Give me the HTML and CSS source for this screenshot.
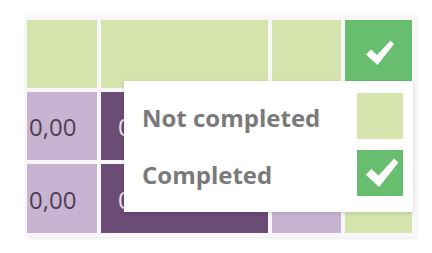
FILE: index.html
```html
<!DOCTYPE html>
<html>
<head>
<meta charset="utf-8">
<link rel="stylesheet" href="styles.css">
</head>
<body>
<div class="card">
  <div class="cell lg"></div>
  <div class="cell lg"></div>
  <div class="cell lg"></div>
  <div class="cell gr">
    <svg class="chk" width="28" height="25" viewBox="0 0 28 25"><polygon points="0,14.5 5,9.5 11,15 24.5,0.5 28,4 11.5,25" fill="#fff"/></svg>
  </div>
  <div class="cell lp"><span class="num">0,00</span></div>
  <div class="cell dp"><span class="wnum">0,00</span></div>
  <div class="cell lp"></div>
  <div class="cell lg"></div>
  <div class="cell lp"><span class="num">0,00</span></div>
  <div class="cell dp"><span class="wnum">0,00</span></div>
  <div class="cell lp"></div>
  <div class="cell lg"></div>
</div>
<div class="legend">
  <div class="row">
    <span class="label">Not completed</span>
    <span class="swatch lg"></span>
  </div>
  <div class="row">
    <span class="label">Completed</span>
    <span class="swatch gr">
      <svg width="34" height="29" viewBox="0 0 28 25"><polygon points="0,14.5 5,9.5 11,15 24.5,0.5 28,4 11.5,25" fill="#fff"/></svg>
    </span>
  </div>
</div>
</body>
</html>
```
FILE: styles.css
```css
html, body {
  margin: 0;
  padding: 0;
  background: #ffffff;
}
body {
  width: 432px;
  height: 253px;
  position: relative;
  overflow: hidden;
  font-family: "Open Sans", "DejaVu Sans", sans-serif;
}
.card {
  margin: 16px 0 0 26px;
  width: 386px;
  padding: 4px 4px 4px 1px;
  background: #f8f6f8;
  box-shadow: 0 1px 4px rgba(0, 0, 0, 0.1);
  display: grid;
  grid-template-columns: 70px 167px 69px 67px;
  grid-template-rows: 68px 68px 69px;
  gap: 4px;
}
.cell {
  display: flex;
  align-items: center;
  overflow: hidden;
}
.lg { background: #d5e3ad; }
.gr { background: #68be6e; }
.lp { background: #c9b3d3; }
.dp { background: #6b4c74; }
.gr.cell { justify-content: center; }
.chk { margin-left: 3px; margin-bottom: 3px; }
.num {
  font-size: 24px;
  color: #4d3f52;
  padding-left: 2px;
  padding-top: 1px;
}
.wnum {
  display: inline-block;
  width: 7px;
  overflow: hidden;
  white-space: nowrap;
  font-size: 24px;
  color: #e9e0ec;
  margin-left: 17px;
  padding-top: 1px;
}
.legend {
  position: absolute;
  left: 124px;
  top: 81px;
  width: 260px;
  padding: 12px 10px 16px 19px;
  background: #ffffff;
  box-shadow: 0 1px 4px rgba(0, 0, 0, 0.15);
  display: flex;
  flex-direction: column;
  gap: 11px;
}
.row {
  display: flex;
  align-items: center;
  justify-content: space-between;
}
.label {
  font-size: 24px;
  font-weight: 700;
  color: #7a7a7a;
  padding-top: 3px;
  margin-left: -1px;
}
.swatch {
  width: 46px;
  height: 46px;
  display: flex;
  align-items: center;
  justify-content: center;
}
.swatch svg { margin-left: 4px; margin-bottom: 2px; }
```
